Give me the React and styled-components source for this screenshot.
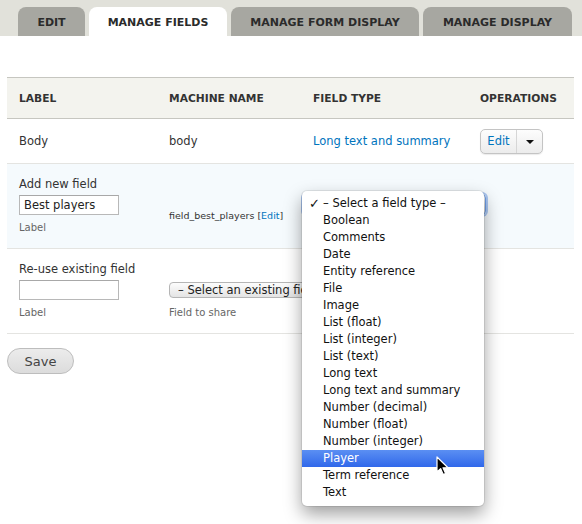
import React from "react";
import styled, { createGlobalStyle } from "styled-components";

const GlobalStyle = createGlobalStyle`
	body {
		margin: 0;
		background: #fff;
		font-family: "DejaVu Sans", Verdana, sans-serif;
		color: #333;
	}
`;

const Page = styled.div`
	position: relative;
	width: 582px;
	height: 524px;
	overflow: hidden;
`;

const TabBar = styled.div`
	height: 36px;
	background: #e1e1da;
	display: flex;
	align-items: flex-end;
	gap: 4px;
	padding-left: 18px;
	box-sizing: border-box;
`;

const Tab = styled.div`
	height: 29px;
	width: ${({ $w }) => $w}px;
	box-sizing: border-box;
	border-radius: 8px 8px 0 0;
	background: ${({ $active }) => ($active ? "#fff" : "#a7a7a1")};
	display: flex;
	align-items: center;
	justify-content: center;
	font-weight: bold;
	font-size: 11px;
	color: #2b2b2b;
	padding-top: 2px;
`;

const Table = styled.div`
	margin: 41px 8px 0 7px;
`;

const Row = styled.div`
	display: grid;
	grid-template-columns: 150px 144px 167px 106px;
	height: ${({ $h }) => $h}px;
	background: ${({ $bg }) => $bg || "#fff"};
	border-bottom: 1px solid ${({ $line }) => $line || "#e4e4e1"};
	border-top: ${({ $top }) => ($top ? "1px solid #c6c6c0" : "none")};
	align-items: ${({ $middle }) => ($middle ? "center" : "stretch")};
`;

const HeadCell = styled.div`
	padding-left: 12px;
	font-weight: bold;
	font-size: 10.7px;
	text-transform: uppercase;
	color: #333;
`;

const Cell = styled.div`
	padding-left: ${({ $pl }) => ($pl === undefined ? 12 : $pl)}px;
	padding-top: ${({ $pt }) => $pt || 0}px;
	font-size: 11.5px;
	line-height: 14px;
	display: flex;
	flex-direction: column;
	align-items: flex-start;
`;

const Link = styled.span`
	color: #0074bd;
`;

const Input = styled.div`
	margin-top: 4px;
	width: 100px;
	height: 20px;
	box-sizing: border-box;
	border: 1px solid #b8b8b8;
	border-top-color: #a8a8a8;
	background: #fff;
	font-size: 11.5px;
	line-height: 18px;
	padding-left: 4px;
	color: #222;
`;

const Hint = styled.div`
	margin-top: ${({ $mt }) => $mt || 6}px;
	font-size: 10px;
	line-height: 13px;
	color: #666;
`;

const MachineName = styled.div`
	font-size: 9.5px;
	line-height: 12px;
	color: #333;
`;

const SplitButton = styled.div`
	display: flex;
	width: 63px;
	height: 25px;
	box-sizing: border-box;
	border: 1px solid #c4c4c4;
	border-radius: 5px;
	background: linear-gradient(#fdfdfd, #ececec);
	box-shadow: 0 1px 1px rgba(0, 0, 0, 0.08);
	font-size: 11.5px;
	overflow: hidden;
`;

const SplitMain = styled.div`
	width: 35px;
	display: flex;
	align-items: center;
	justify-content: center;
	color: #0074bd;
	border-right: 1px solid #d6d6d6;
`;

const SplitArrow = styled.div`
	flex: 1;
	display: flex;
	align-items: center;
	justify-content: center;
	&::after {
		content: "";
		border-left: 4px solid transparent;
		border-right: 4px solid transparent;
		border-top: 4px solid #111;
		margin-top: 1px;
	}
`;

const FakeSelect = styled.div`
	width: ${({ $w }) => $w}px;
	height: ${({ $h }) => $h}px;
	box-sizing: border-box;
	border: 1px solid ${({ $focus }) => ($focus ? "#6d9de6" : "#b5b5b5")};
	border-radius: 4px;
	background: linear-gradient(#fcfcfc, #e4e4e4);
	box-shadow: ${({ $focus }) => ($focus ? "0 0 0 2px #a9c6f2" : "none")};
	font-size: 11.5px;
	line-height: ${({ $h }) => $h - 2}px;
	padding-left: 8px;
	white-space: nowrap;
	color: #222;
`;

/* the part of the select label left uncovered by the open menu */
const SelectLabel = styled.div`
	width: 124px;
	overflow: hidden;
`;

const SaveButton = styled.div`
	margin: 14px 0 0 7px;
	width: 67px;
	height: 26px;
	box-sizing: border-box;
	border: 1px solid #bdbdbd;
	border-radius: 13px;
	background: linear-gradient(#ececec, #dcdcdc);
	display: flex;
	align-items: center;
	justify-content: center;
	font-size: 13px;
	color: #444;
`;

const Popup = styled.div`
	position: absolute;
	left: 302px;
	top: 191px;
	width: 182px;
	padding: 4px 0 5px;
	background: #fff;
	border-radius: 5px;
	box-shadow: 0 0 0 1px rgba(0, 0, 0, 0.08), 0 8px 18px rgba(0, 0, 0, 0.38);
`;

const Option = styled.div`
	position: relative;
	height: 17px;
	line-height: 17px;
	padding-left: 21px;
	font-size: 11.5px;
	color: ${({ $selected }) => ($selected ? "#fff" : "#111")};
	background: ${({ $selected }) =>
		$selected ? "linear-gradient(#5b8ff3, #3068ea)" : "transparent"};
`;

const Check = styled.span`
	position: absolute;
	left: 7px;
	top: 0;
	font-size: 13px;
`;

const Cursor = styled.svg`
	position: absolute;
	left: 436px;
	top: 456px;
`;

const options = [
	"– Select a field type –",
	"Boolean",
	"Comments",
	"Date",
	"Entity reference",
	"File",
	"Image",
	"List (float)",
	"List (integer)",
	"List (text)",
	"Long text",
	"Long text and summary",
	"Number (decimal)",
	"Number (float)",
	"Number (integer)",
	"Player",
	"Term reference",
	"Text",
];

const tabs = [
	{ label: "Edit", w: 67 },
	{ label: "Manage fields", w: 138, active: true },
	{ label: "Manage form display", w: 188 },
	{ label: "Manage display", w: 149 },
];

export default function App() {
	return (
		<Page>
			<GlobalStyle />
			<TabBar>
				{tabs.map((t) => (
					<Tab key={t.label} $w={t.w} $active={t.active}>
						{t.label.toUpperCase()}
					</Tab>
				))}
			</TabBar>

			<Table>
				<Row $h={40} $top $bg="#f3f3ee" $line="#c6c6c0" $middle>
					<HeadCell>Label</HeadCell>
					<HeadCell>Machine name</HeadCell>
					<HeadCell>Field type</HeadCell>
					<HeadCell>Operations</HeadCell>
				</Row>
				<Row $h={44} $middle>
					<Cell>Body</Cell>
					<Cell>body</Cell>
					<Cell>
						<Link>Long text and summary</Link>
					</Cell>
					<Cell>
						<SplitButton>
							<SplitMain>Edit</SplitMain>
							<SplitArrow />
						</SplitButton>
					</Cell>
				</Row>
				<Row $h={84} $bg="#f5fafd">
					<Cell $pt={13}>
						Add new field
						<Input>Best players</Input>
						<Hint>Label</Hint>
					</Cell>
					<Cell $pt={46}>
						<MachineName>
							field_best_players [<Link>Edit</Link>]
						</MachineName>
					</Cell>
					<Cell $pt={30} $pl={2}>
						<FakeSelect $w={183} $h={21} $focus />
					</Cell>
					<Cell />
				</Row>
				<Row $h={84}>
					<Cell $pt={13}>
						Re-use existing field
						<Input />
						<Hint>Label</Hint>
					</Cell>
					<Cell $pt={33}>
						<FakeSelect $w={286} $h={16}>
							<SelectLabel>– Select an existing field –</SelectLabel>
						</FakeSelect>
						<Hint $mt={8}>Field to share</Hint>
					</Cell>
					<Cell />
					<Cell />
				</Row>
			</Table>

			<SaveButton>Save</SaveButton>

			<Popup>
				{options.map((o, i) => (
					<Option key={o} $selected={o === "Player"}>
						{i === 0 && <Check>✓</Check>}
						{o}
					</Option>
				))}
			</Popup>

			<Cursor width="14" height="21" viewBox="0 0 14 21">
				<path
					d="M1 1 L1 16 L4.6 12.6 L7.2 18.6 L9.6 17.6 L7 11.8 L12 11.8 Z"
					fill="#000"
					stroke="#fff"
					strokeWidth="1.2"
					strokeLinejoin="round"
				/>
			</Cursor>
		</Page>
	);
}
